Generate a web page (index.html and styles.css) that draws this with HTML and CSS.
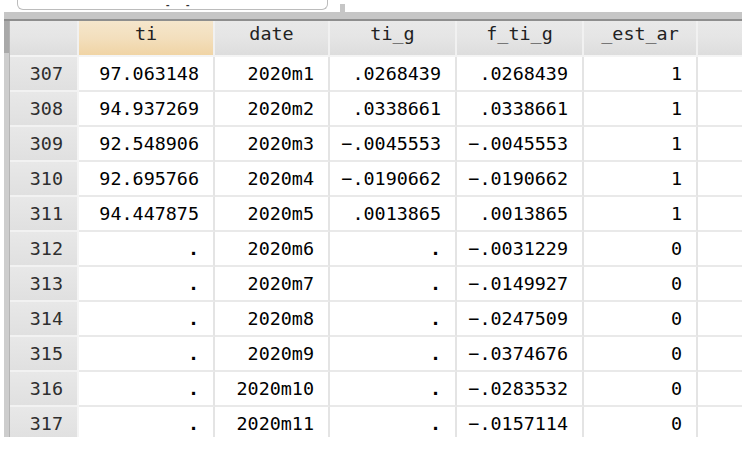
FILE: index.html
```html
<!DOCTYPE html>
<html>
<head>
<meta charset="utf-8">
<link rel="stylesheet" href="styles.css">
</head>
<body>
<div class="window">
  <div class="topbar">
    <div class="field"><span class="cut">- -</span></div>
    <div class="tick"></div>
  </div>
  <div class="band"></div>
  <div class="sheet">
    <div class="gutter"><div class="thumb"></div></div>
    <div class="grid">
      <div class="hd corner"></div>
      <div class="hd sel">ti</div>
      <div class="hd">date</div>
      <div class="hd">ti_g</div>
      <div class="hd">f_ti_g</div>
      <div class="hd">_est_ar</div>
      <div class="hd last"></div>

      <div class="rn">307</div><div class="c">97.063148</div><div class="c">2020m1</div><div class="c">.0268439</div><div class="c">.0268439</div><div class="c">1</div><div class="c last"></div>
      <div class="rn">308</div><div class="c">94.937269</div><div class="c">2020m2</div><div class="c">.0338661</div><div class="c">.0338661</div><div class="c">1</div><div class="c last"></div>
      <div class="rn">309</div><div class="c">92.548906</div><div class="c">2020m3</div><div class="c">&minus;.0045553</div><div class="c">&minus;.0045553</div><div class="c">1</div><div class="c last"></div>
      <div class="rn">310</div><div class="c">92.695766</div><div class="c">2020m4</div><div class="c">&minus;.0190662</div><div class="c">&minus;.0190662</div><div class="c">1</div><div class="c last"></div>
      <div class="rn">311</div><div class="c">94.447875</div><div class="c">2020m5</div><div class="c">.0013865</div><div class="c">.0013865</div><div class="c">1</div><div class="c last"></div>
      <div class="rn">312</div><div class="c"><b class="dot">.</b></div><div class="c">2020m6</div><div class="c"><b class="dot">.</b></div><div class="c">&minus;.0031229</div><div class="c">0</div><div class="c last"></div>
      <div class="rn">313</div><div class="c"><b class="dot">.</b></div><div class="c">2020m7</div><div class="c"><b class="dot">.</b></div><div class="c">&minus;.0149927</div><div class="c">0</div><div class="c last"></div>
      <div class="rn">314</div><div class="c"><b class="dot">.</b></div><div class="c">2020m8</div><div class="c"><b class="dot">.</b></div><div class="c">&minus;.0247509</div><div class="c">0</div><div class="c last"></div>
      <div class="rn">315</div><div class="c"><b class="dot">.</b></div><div class="c">2020m9</div><div class="c"><b class="dot">.</b></div><div class="c">&minus;.0374676</div><div class="c">0</div><div class="c last"></div>
      <div class="rn">316</div><div class="c"><b class="dot">.</b></div><div class="c">2020m10</div><div class="c"><b class="dot">.</b></div><div class="c">&minus;.0283532</div><div class="c">0</div><div class="c last"></div>
      <div class="rn">317</div><div class="c"><b class="dot">.</b></div><div class="c">2020m11</div><div class="c"><b class="dot">.</b></div><div class="c">&minus;.0157114</div><div class="c">0</div><div class="c last"></div>
    </div>
  </div>
</div>
</body>
</html>
```

FILE: styles.css
```css
html, body {
  margin: 0;
  padding: 0;
  background: #ffffff;
}
body {
  width: 742px;
  height: 454px;
  overflow: hidden;
  font-family: "DejaVu Sans Mono", "Liberation Mono", monospace;
  font-size: 18.4px;
  color: #000000;
}
.window {
  height: 437px;
  overflow: hidden;
  display: flex;
  flex-direction: column;
}
.topbar {
  height: 12px;
  display: flex;
  align-items: flex-start;
  flex: none;
}
.field {
  margin-left: 17px;
  width: 311px;
  height: 10px;
  border: 1px solid #bcbcbc;
  border-top: none;
  border-radius: 0 0 6px 6px;
  background: #ffffff;
  display: flex;
  align-items: flex-start;
  padding-left: 147px;
  box-sizing: border-box;
}
.cut {
  font-size: 9px;
  font-weight: bold;
  color: #333333;
  line-height: 10px;
  letter-spacing: 4.6px;
}
.tick {
  margin-left: 12px;
  margin-top: 4px;
  width: 5px;
  height: 8px;
  background: #c6c6c6;
}
.band {
  flex: none;
  height: 7px;
  margin-left: 4px;
  background: #c6c6c6;
  border-bottom: 2px solid #8e8e8e;
}
.sheet {
  flex: 1;
  display: flex;
  min-height: 0;
}
.gutter {
  width: 5px;
  margin-left: 4px;
  flex: none;
  background: #cdcdcd;
  border-right: 1px solid #b4b4b4;
}
.thumb {
  height: 32px;
  background: #a9a9a9;
}
.grid {
  flex: 1;
  display: grid;
  grid-template-columns: 69px 136px 115px 127px 127px 114px 1fr;
  grid-template-rows: 36px repeat(11, 35px);
  align-content: start;
}
.hd {
  background: linear-gradient(#e9e9e9 0%, #e5e5e5 50%, #dddddd 100%);
  border-right: 2px solid #f1f1f1;
  border-bottom: 2px solid #f4f4f4;
  text-align: center;
  line-height: 26px;
  padding-bottom: 8px;
  color: #222222;
}
.hd.sel {
  background: linear-gradient(#f5e6cc 0%, #f3dfbd 50%, #f0d4a5 100%);
}
.hd.last {
  border-right: none;
}
.rn {
  background: linear-gradient(#e8e8e8 0%, #e0e0e0 100%);
  border-right: 2px solid #f4f4f4;
  border-bottom: 2px solid #f2f2f2;
  text-align: right;
  padding-right: 14px;
  line-height: 33px;
  color: #2e2e2e;
}
.c {
  background: #ffffff;
  border-right: 2px solid #e4e4e4;
  border-bottom: 2px solid #e9e9e9;
  text-align: right;
  padding-right: 14px;
  line-height: 33px;
  white-space: nowrap;
}
.c.last {
  border-right: none;
}
.dot {
  font-weight: bold;
}
```
